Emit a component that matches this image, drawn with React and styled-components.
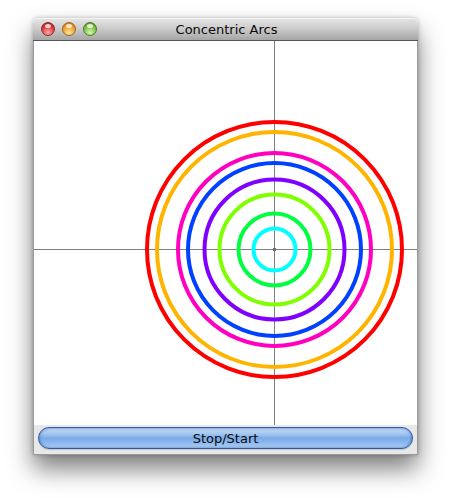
import React from "react";
import styled, { createGlobalStyle } from "styled-components";

const Global = createGlobalStyle`
  html, body { margin: 0; padding: 0; background: #ffffff; }
  body { font-family: "DejaVu Sans", "Liberation Sans", sans-serif; }
`;

const Page = styled.div`
  width: 451px;
  height: 502px;
  padding: 18px 0 0 33px;
  box-sizing: border-box;
  overflow: hidden;
`;

const Window = styled.div`
  width: 385px;
  display: flex;
  flex-direction: column;
  border-radius: 5px 5px 0 0;
  background: #e8e8e8;
  box-shadow: 0 14px 24px rgba(0, 0, 0, 0.5), 0 0 4px rgba(0, 0, 0, 0.25);
`;

const TitleBar = styled.div`
  height: 22px;
  position: relative;
  display: flex;
  align-items: center;
  justify-content: center;
  border-radius: 5px 5px 0 0;
  background: linear-gradient(#e6e6e6, #cdcdcd 45%, #a6a6a6);
  border-bottom: 1px solid #555555;
  box-shadow: inset 0 1px 0 #f4f4f4;
`;

const Title = styled.span`
  font-size: 13px;
  color: #0a0a0a;
  padding-left: 2px;
`;

const Lights = styled.div`
  position: absolute;
  left: 8px;
  top: 4px;
  display: flex;
  gap: 7px;
`;

const Light = styled.div`
  width: 14px;
  height: 14px;
  border-radius: 50%;
  box-sizing: border-box;
  border: 1px solid ${(p) => p.$edge};
  background: radial-gradient(circle at 50% 80%, ${(p) => p.$glow} 0%, ${(p) => p.$base} 55%, ${(p) => p.$dark} 100%);
  position: relative;
  &::after {
    content: "";
    position: absolute;
    left: 3px;
    top: 1px;
    width: 6px;
    height: 4px;
    border-radius: 50%;
    background: rgba(255, 255, 255, 0.75);
  }
`;

const Body = styled.div`
  border-left: 1px solid #9a9a9a;
  border-right: 1px solid #9a9a9a;
  border-bottom: 1px solid #9a9a9a;
  display: flex;
  flex-direction: column;
`;

const Canvas = styled.div`
  height: 384px;
  background: #ffffff;
  & > svg { display: block; }
`;

const ButtonBar = styled.div`
  height: 29px;
  background: #e8e8e8;
  padding: 2px 4px 0 4px;
  box-sizing: border-box;
`;

const PillButton = styled.button`
  width: 375px;
  height: 22px;
  border-radius: 11px;
  border: 1px solid #2f5ba8;
  background: linear-gradient(#c6dcf6 0%, #a2c6f0 30%, #7aabe8 50%, #8cb9ee 75%, #b5d4f6 100%);
  box-shadow: inset 0 0 3px rgba(30, 70, 160, 0.7), 0 1px 1px rgba(0, 0, 0, 0.15);
  font-family: "DejaVu Sans", "Liberation Sans", sans-serif;
  font-size: 13px;
  color: #0a0a0a;
  padding: 0;
  margin: 0;
  cursor: pointer;
`;

const rings = [
  { r: 127.5, c: "#ff0000" },
  { r: 117.5, c: "#ffb400" },
  { r: 96.5, c: "#ff00c0" },
  { r: 86.5, c: "#0040ff" },
  { r: 70, c: "#8000ff" },
  { r: 55, c: "#80ff00" },
  { r: 36, c: "#00ff40" },
  { r: 21, c: "#00ffff" },
];

const CX = 240.5;
const CY = 208.5;

export default function App() {
  return (
    <>
      <Global />
      <Page>
        <Window>
          <TitleBar>
            <Lights>
              <Light $edge="#8c2a2a" $base="#e0393b" $dark="#a01418" $glow="#ffb0a8" />
              <Light $edge="#9a6a1c" $base="#f0a030" $dark="#c06a10" $glow="#ffe6a0" />
              <Light $edge="#4a7a2a" $base="#82c24a" $dark="#4a8a20" $glow="#d8f6a8" />
            </Lights>
            <Title>Concentric Arcs</Title>
          </TitleBar>
          <Body>
            <Canvas>
              <svg width="383" height="384" viewBox="0 0 383 384">
                <line x1={CX} y1="0" x2={CX} y2="384" stroke="#808080" strokeWidth="1" />
                <line x1="0" y1={CY} x2="383" y2={CY} stroke="#808080" strokeWidth="1" />
                {rings.map((ring) => (
                  <circle key={ring.r} cx={CX} cy={CY} r={ring.r} fill="none" stroke={ring.c} strokeWidth="4" />
                ))}
                <rect x={CX - 1.5} y={CY - 1.5} width="3" height="3" fill="#707070" />
              </svg>
            </Canvas>
            <ButtonBar>
              <PillButton>Stop/Start</PillButton>
            </ButtonBar>
          </Body>
        </Window>
      </Page>
    </>
  );
}
